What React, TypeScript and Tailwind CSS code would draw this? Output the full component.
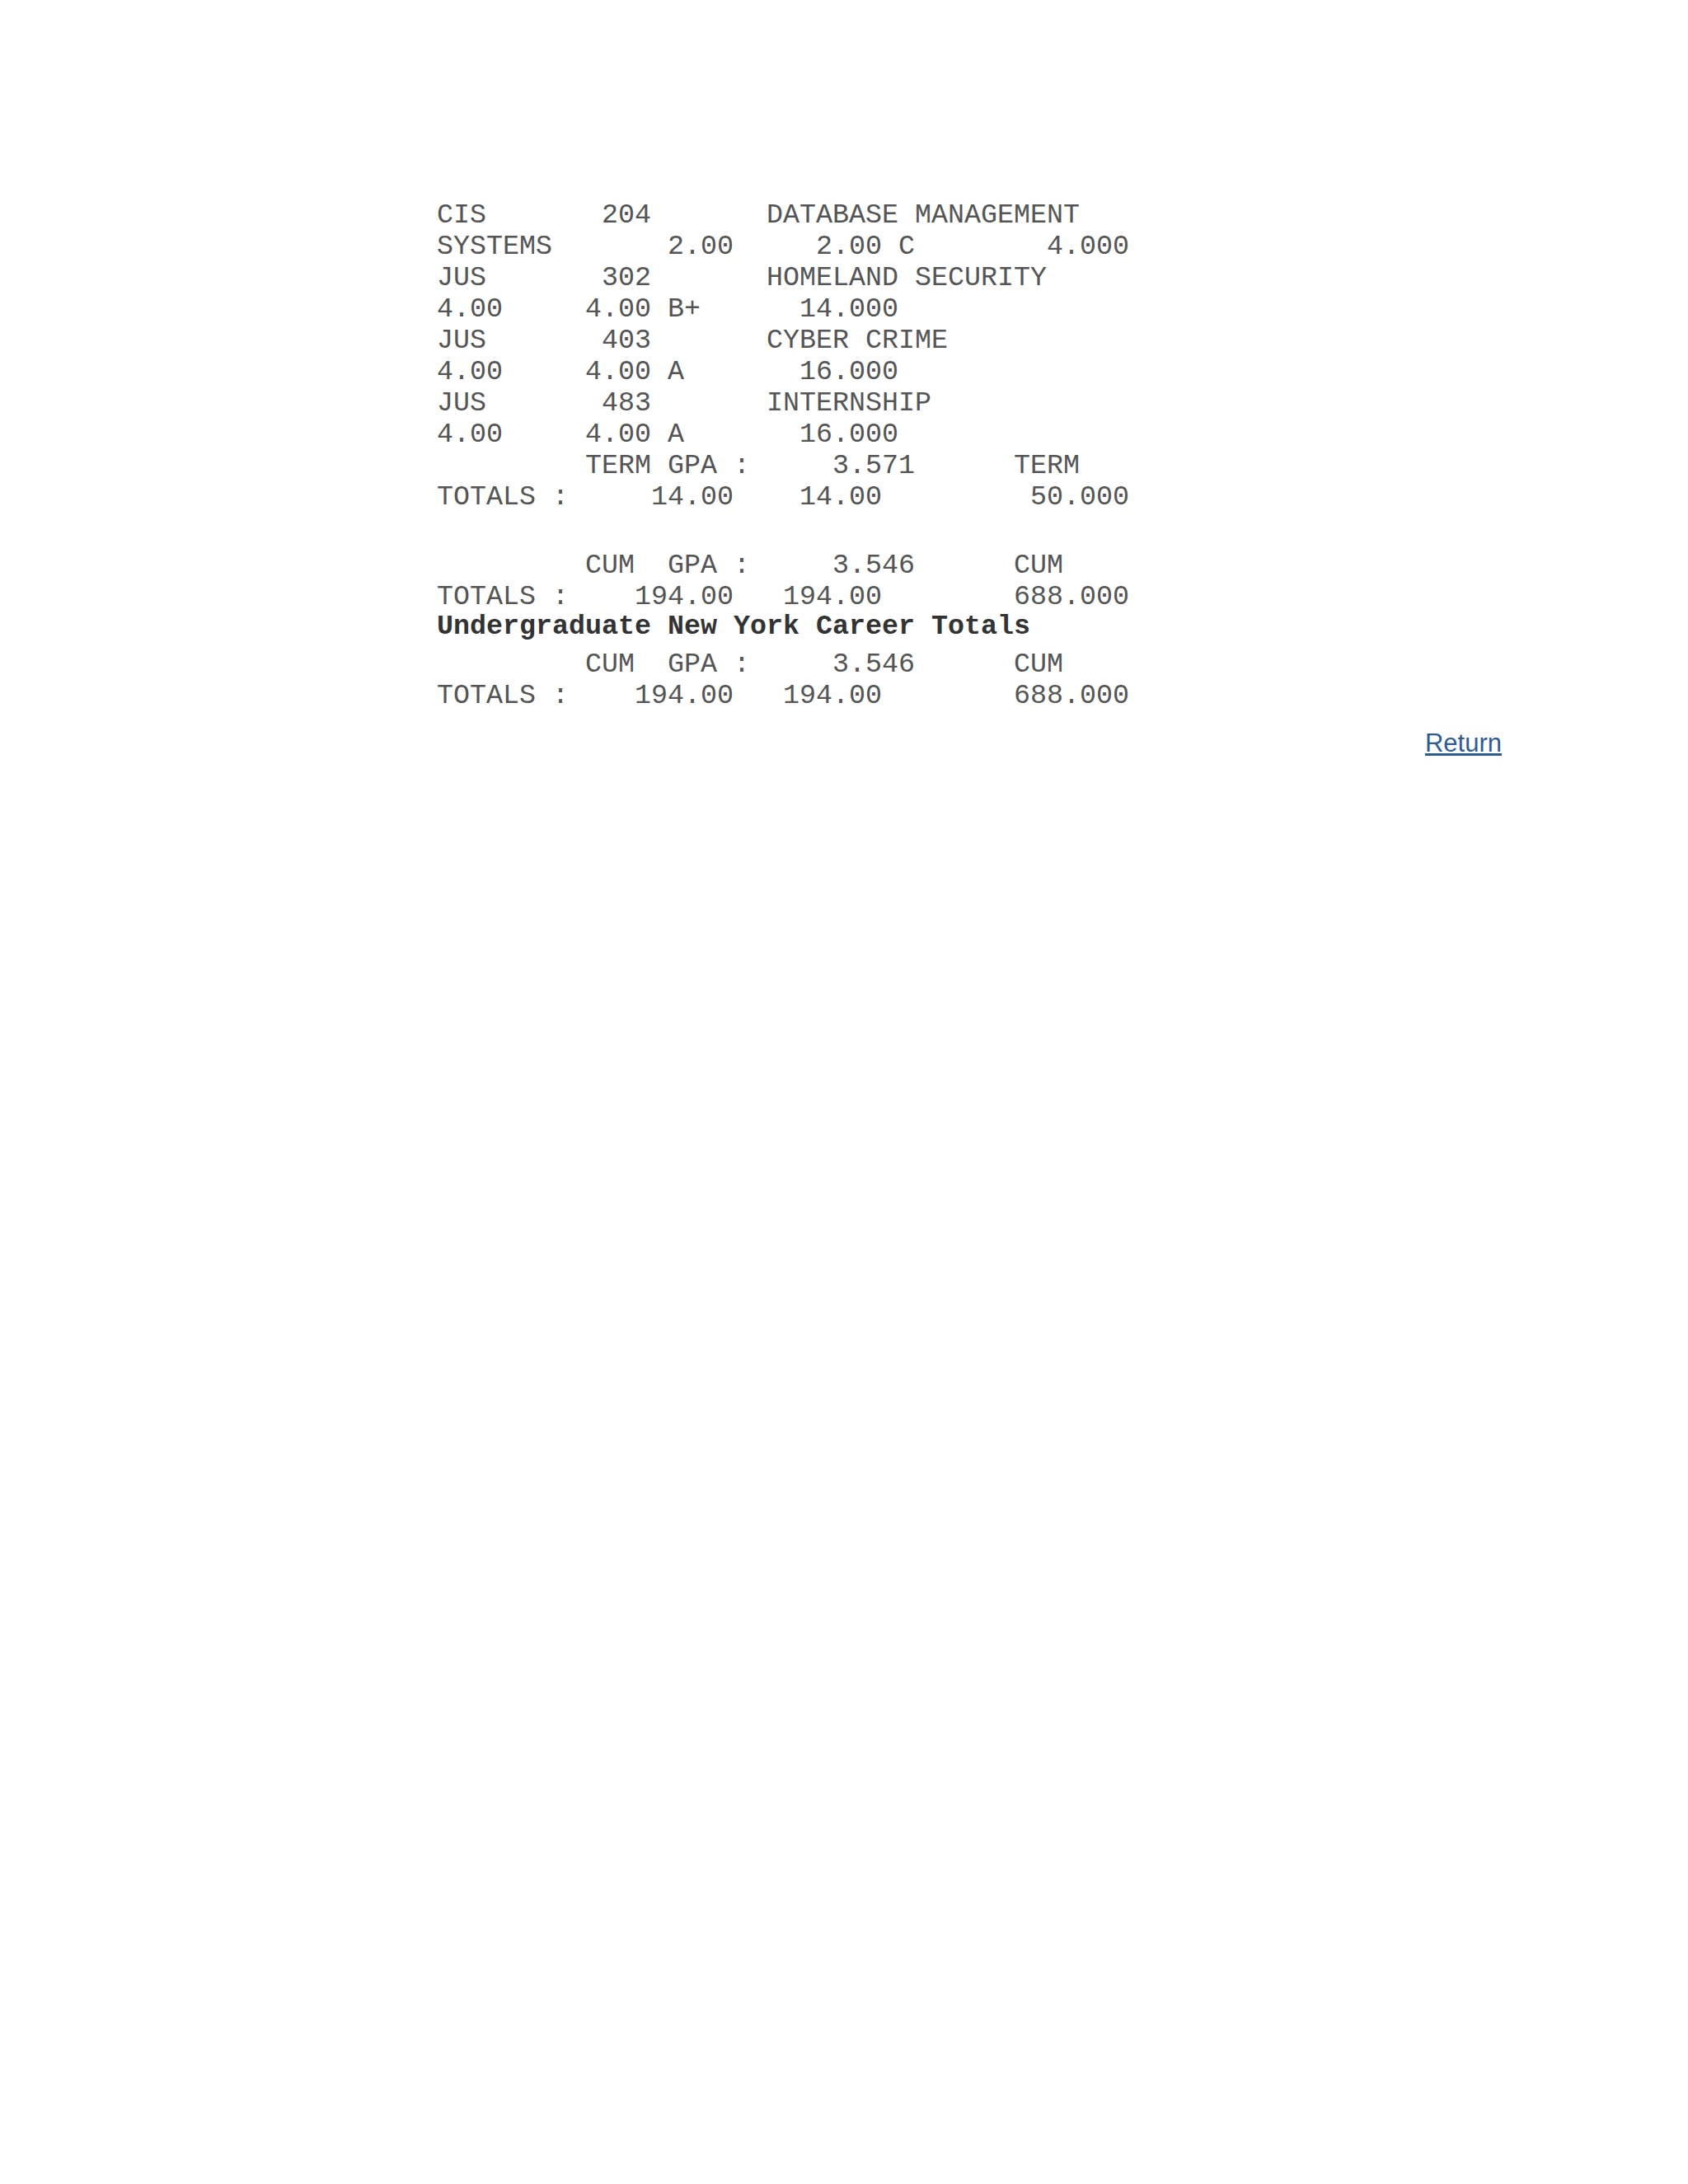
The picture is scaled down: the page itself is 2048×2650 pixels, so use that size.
const mono = { fontFamily: '"Liberation Mono", "Courier New", monospace' }

const termRows = [
  'CIS       204       DATABASE MANAGEMENT',
  'SYSTEMS       2.00     2.00 C        4.000',
  'JUS       302       HOMELAND SECURITY',
  '4.00     4.00 B+      14.000',
  'JUS       403       CYBER CRIME',
  '4.00     4.00 A       16.000',
  'JUS       483       INTERNSHIP',
  '4.00     4.00 A       16.000',
  '         TERM GPA :     3.571      TERM',
  'TOTALS :     14.00    14.00         50.000',
]

const Row = ({ text }: { text: string }) => (
  <div className="h-[38px] whitespace-pre leading-[38px]">{text}</div>
)

const App = () => {
  return (
    <div className="min-h-[2650px] w-full bg-white">
      <div className="ml-[530px] w-[1292px] pt-[242px]">
        <div className="text-[33.33px] text-[#555]" style={mono}>
          {termRows.map((r, i) => (
            <Row key={i} text={r} />
          ))}
          <div className="h-[45px]" />
          <Row text="         CUM  GPA :     3.546      CUM" />
          <Row text="TOTALS :    194.00   194.00        688.000" />
          <div className="h-[44px] whitespace-pre font-bold leading-[34px] text-[#333]">
            Undergraduate New York Career Totals
          </div>
          <Row text="         CUM  GPA :     3.546      CUM" />
          <Row text="TOTALS :    194.00   194.00        688.000" />
        </div>
        <div className="mt-[21px] text-right text-[31px] leading-[35px]" style={{ fontFamily: '"Liberation Sans", Arial, sans-serif' }}>
          <a href="#" className="text-[#2e5c92] underline">
            Return
          </a>
        </div>
      </div>
    </div>
  )
}

export default App
